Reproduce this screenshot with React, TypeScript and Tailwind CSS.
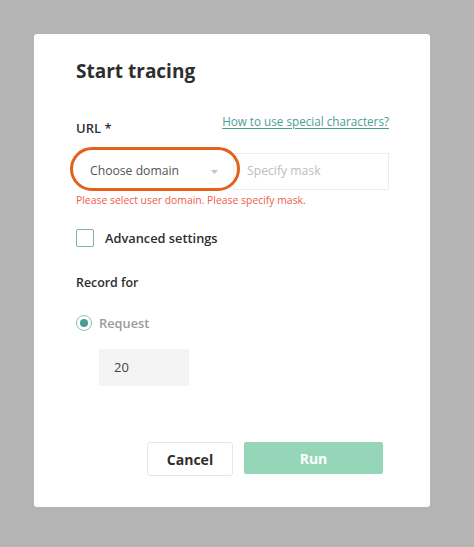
export default function App() {
  return (
    <div
      className="h-[547px] w-[474px] bg-[#b4b4b4] pl-[34px] pt-[34px]"
      style={{ fontFamily: '"Open Sans", "Noto Sans", sans-serif' }}
    >
      <div className="flex h-[473px] w-[396px] flex-col rounded-[3px] bg-white pl-[42px] pr-[41px]">
        <h1 className="mt-[25px] text-[19px] font-bold leading-[24px] text-[#2e2e2e]">Start tracing</h1>

        <div className="mt-[30px] flex items-start justify-between">
          <span className="mt-[6px] text-[13px] font-semibold leading-[18px] text-[#333]">URL *</span>
          <a href="#" className="text-[11.7px] leading-[16px] text-[#4b9e92] underline underline-offset-2">
            How to use special characters?
          </a>
        </div>

        <div className="mt-[16px] flex h-[37px]">
          <div className="relative flex w-[157px] items-center justify-between bg-white pl-[14px] pr-[15px]">
            <span className="text-[12.2px] text-[#555]">Choose domain</span>
            <svg width="7" height="4" viewBox="0 0 7 4">
              <path d="M0 0h7L3.5 4z" fill="#c4c4c4" />
            </svg>
            <div className="absolute left-[-6px] top-[-6px] h-[44px] w-[170px] rounded-[22px] border-[3.5px] border-[#e4601b]" />
          </div>
          <div className="flex flex-1 items-center border border-[#ececec] pl-[13px] text-[12.2px] text-[#bdbdbd]">
            Specify mask
          </div>
        </div>

        <p className="mt-[3px] text-[10.4px] leading-[14px] text-[#ef5c4b]">
          Please select user domain. Please specify mask.
        </p>

        <label className="mt-[22px] flex items-center">
          <span className="h-[18px] w-[18px] rounded-[2px] border-[1.5px] border-[#7fb3ab]" />
          <span className="ml-[11px] text-[12.8px] font-semibold leading-[18px] text-[#2e2e2e]">Advanced settings</span>
        </label>

        <div className="mt-[27px] text-[12.4px] font-semibold leading-[18px] text-[#2e2e2e]">Record for</div>

        <div className="mt-[22px] flex items-center">
          <span className="flex h-[16px] w-[16px] items-center justify-center rounded-full border-[1.5px] border-[#8cc4ba]">
            <span className="h-[8px] w-[8px] rounded-full bg-[#4a9d8f]" />
          </span>
          <span className="ml-[7px] text-[12.8px] font-semibold leading-[18px] text-[#9b9b9b]">Request</span>
        </div>

        <div className="ml-[23px] mt-[17px] flex h-[37px] w-[90px] items-center bg-[#f4f4f4] pl-[15px] text-[13px] text-[#444]">
          20
        </div>

        <div className="mr-[6px] mt-[56px] flex justify-end gap-[11px]">
          <button className="h-[34px] w-[86px] rounded-[3px] border border-[#e6e6e6] bg-white text-[14px] font-bold text-[#2e2e2e]">
            Cancel
          </button>
          <button className="h-[32px] w-[139px] rounded-[2px] bg-[#95d6b9] text-[14px] font-bold text-white">
            Run
          </button>
        </div>
      </div>
    </div>
  );
}
